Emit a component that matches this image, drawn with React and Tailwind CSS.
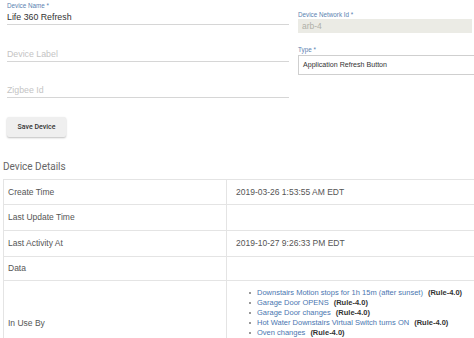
import React from "react";

const rules = [
  "Downstairs Motion stops for 1h 15m (after sunset)",
  "Garage Door OPENS",
  "Garage Door changes",
  "Hot Water Downstairs Virtual Switch turns ON",
  "Oven changes",
];

function Field({ label, value, placeholder, className = "" }) {
  return (
    <div className={className}>
      <div className="h-[7px] text-[6.3px] leading-[7px] text-[#5a7fb0]">{label}</div>
      <div
        className={
          "mt-[1px] h-[15px] border-b border-[#d6d6d6] text-[8.8px] leading-[14px] " +
          (value ? "text-[#333]" : "text-[#c4c4c4]")
        }
      >
        {value || placeholder}
      </div>
    </div>
  );
}

function Row({ label, value, h }) {
  return (
    <div className={"grid grid-cols-[222px_1fr] border-b border-[#e4e4e4] text-[8.5px] text-[#555] " + h}>
      <div className="flex items-center pl-[4px]">{label}</div>
      <div className="flex items-center border-l border-[#e4e4e4] pl-[9px]">{value}</div>
    </div>
  );
}

export default function App() {
  return (
    <div
      className="w-[474px] h-[338px] overflow-hidden bg-white"
      style={{ fontFamily: "'Liberation Sans', Arial, sans-serif" }}
    >
      {/* Device form */}
      <div className="flex pl-[7px]">
        <div className="w-[282px] shrink-0 pt-[2px]">
          <Field label="Device Name *" value="Life 360 Refresh" />
          <Field label="" placeholder="Device Label" className="mt-[14px]" />
          <Field label="" placeholder="Zigbee Id" className="mt-[13px]" />
        </div>
        <div className="ml-[9px] w-[180px] shrink-0 pt-[11px]">
          <div className="h-[7px] text-[6.3px] leading-[7px] text-[#5a7fb0]">Device Network Id *</div>
          <div className="mt-[1px] h-[14px] w-[174px] bg-[#ebebe5] pl-[4px] text-[8.5px] leading-[14px] text-[#b0b0a8]">
            arb-4
          </div>
          <div className="mt-[13px] h-[7px] text-[6.3px] leading-[7px] text-[#5a7fb0]">Type *</div>
          <div className="mt-[2px] h-[20px] border border-[#cfcfcf] pl-[4px] text-[7.1px] leading-[18px] text-[#333]">
            Application Refresh Button
          </div>
        </div>
      </div>

      <div className="mt-[19px] flex pl-[7px]">
        <button
          type="button"
          className="h-[20px] w-[59px] rounded-[2px] bg-[#efefef] text-[7px] font-medium text-[#333] shadow-[0_1px_2px_rgba(0,0,0,0.25)]"
          style={{ fontFamily: "Roboto, sans-serif" }}
        >
          Save Device
        </button>
      </div>

      {/* Device details */}
      <div className="pl-[3px]">
        <div
          className="mt-[24px] h-[12px] text-[10px] leading-[12px] text-[#666]"
          style={{ fontFamily: "Roboto, sans-serif" }}
        >
          Device Details
        </div>
        <div className="mt-[6px] w-[480px] border-t border-l border-[#e4e4e4]">
          <Row label="Create Time" value="2019-03-26 1:53:55 AM EDT" h="h-[25px]" />
          <Row label="Last Update Time" value="" h="h-[26px]" />
          <Row label="Last Activity At" value="2019-10-27 9:26:33 PM EDT" h="h-[26px]" />
          <Row label="Data" value="" h="h-[24px]" />
          <div className="grid grid-cols-[222px_1fr] text-[8.5px] text-[#555]">
            <div className="flex items-center pl-[4px]">In Use By</div>
            <div className="border-l border-[#e4e4e4] pl-[22px] pt-[7px] pb-[27px]">
              {rules.map((r) => (
                <div key={r} className="flex h-[10px] items-center text-[7.5px] leading-[10px]">
                  <span className="h-[2px] w-[2px] shrink-0 rounded-full bg-[#777]" />
                  <span className="ml-[6px] text-[#4a76b0]">{r}</span>
                  <span className="ml-[5px] font-bold text-[#333]">(Rule-4.0)</span>
                </div>
              ))}
            </div>
          </div>
        </div>
      </div>
    </div>
  );
}
